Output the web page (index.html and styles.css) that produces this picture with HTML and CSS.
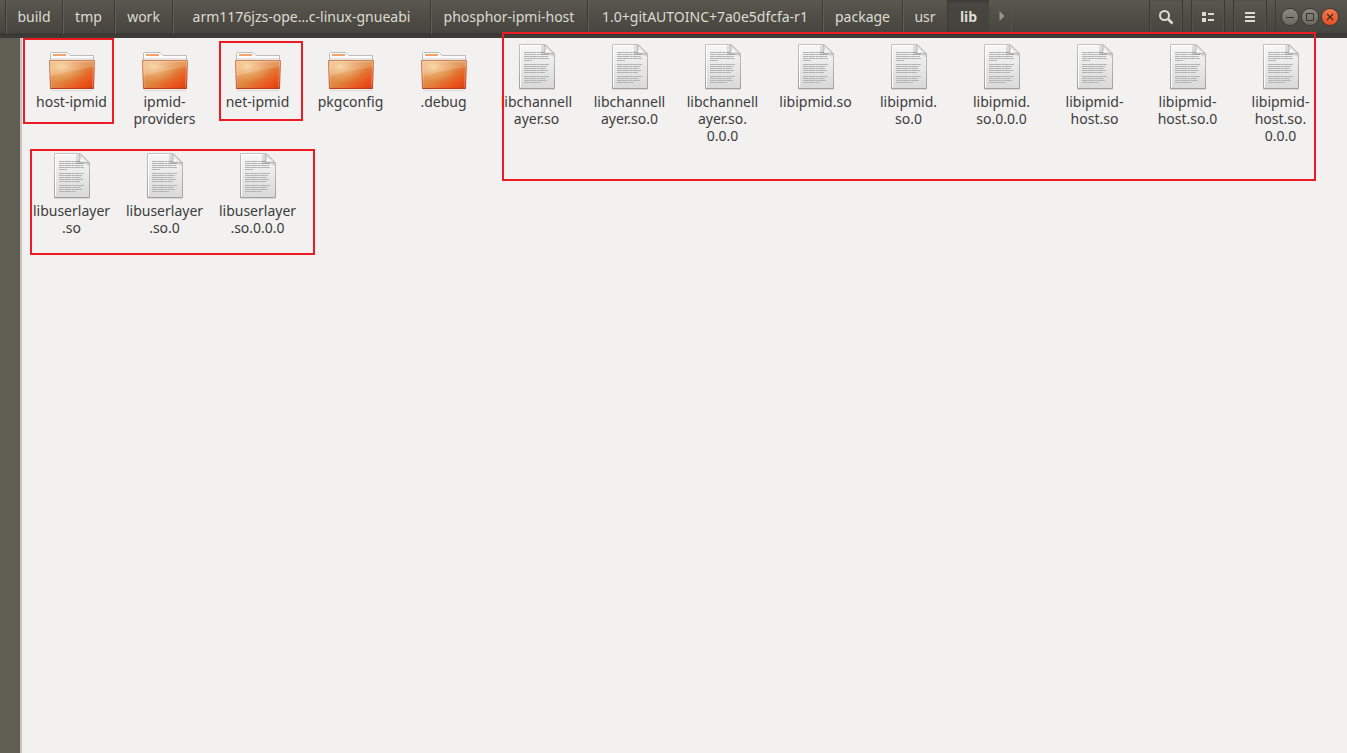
FILE: index.html
```html
<!DOCTYPE html>
<html lang="en">
<head>
  <meta charset="UTF-8">
  <meta name="viewport" content="width=device-width, initial-scale=1.0">
  <title>lib</title>
  <link rel="stylesheet" href="styles.css">
</head>
<body>
  <!-- shared icons -->
  <svg class="defs" width="0" height="0" aria-hidden="true">
    <defs>
      <linearGradient id="folder-front" x1="0" y1="0" x2="1" y2="1">
        <stop offset="0" stop-color="#eba868"/>
        <stop offset="0.5" stop-color="#de8740"/>
        <stop offset="0.8" stop-color="#ea5419"/>
        <stop offset="1" stop-color="#d63c12"/>
      </linearGradient>
      <radialGradient id="folder-glow" cx="0.25" cy="0.2" r="0.6">
        <stop offset="0" stop-color="#f8d8a0" stop-opacity="0.9"/>
        <stop offset="1" stop-color="#f0a870" stop-opacity="0"/>
      </radialGradient>
      <linearGradient id="folder-edge" x1="0" y1="0" x2="0" y2="1">
        <stop offset="0" stop-color="#cf8257"/>
        <stop offset="1" stop-color="#b83a18"/>
      </linearGradient>
      <linearGradient id="paper" x1="0" y1="0" x2="0" y2="1">
        <stop offset="0" stop-color="#f7f7f7"/>
        <stop offset="1" stop-color="#d9d9d9"/>
      </linearGradient>
      <linearGradient id="paper-edge" x1="0" y1="0" x2="0" y2="1">
        <stop offset="0" stop-color="#c2c4c3"/>
        <stop offset="1" stop-color="#a0a0a0"/>
      </linearGradient>
      <linearGradient id="fold" x1="0" y1="1" x2="0.6" y2="0.4">
        <stop offset="0" stop-color="#a8a8a8"/>
        <stop offset="0.4" stop-color="#ffffff"/>
        <stop offset="1" stop-color="#dcdcdc"/>
      </linearGradient>
    </defs>
    <symbol id="folder" viewBox="0 0 47 48">
      <path d="M3 47h42v1H3z" fill="#000" opacity="0.1"/>
      <path d="M2.500 20V10.500q0-1 1-1H19l3 3h23.500V20z" fill="#fbfbfb" stroke="#bcbcba"/>
      <path d="M5 11h13v2H5z" fill="#f2a36c"/>
      <path d="M3 15h42v2H3z" fill="#e4e4e2"/>
      <path d="M1.500 17.500h45l-1 28h-43z" fill="url(#folder-front)" stroke="url(#folder-edge)"/>
      <path d="M2 18h44l-1 27H3z" fill="url(#folder-glow)"/>
      <path d="M2 18h44v6Q24 27 2.500 33z" fill="#fff" opacity="0.16"/>
      <path d="M3 45V18.500h42.500l-1 26" fill="none" stroke="#fff" opacity="0.25"/>
    </symbol>
    <symbol id="file" viewBox="0 0 47 48">
      <path d="M6 46h36v1H6z" fill="#000" opacity="0.1"/>
      <path d="M6.500 1.500H32l9.500 9.500v34.500h-35z" fill="url(#paper)" stroke="url(#paper-edge)"/>
      <path d="M7.500 44V2.500h23" fill="none" stroke="#fff"/>
      <g stroke="#b3b3b3" stroke-dasharray="5 0.300 7 0.300 3 0.300">
        <path d="M11 9.500h25M11 11.500h25M11 13.500h24M11 15.500h25M11 17.500h8"/>
        <path d="M11 21.500h25M11 23.500h23M11 25.500h22M11 27.500h24M11 29.500h21"/>
        <path d="M11 33.500h25M11 35.500h22M11 37.500h23M11 39.500h17"/>
      </g>
      <!-- folded corner with its shadow -->
      <path d="M28 2h4v8l9 1v3q-5-3-13-2z" fill="#000" opacity="0.1"/>
      <path d="M31 2q2 4 0 8.500 5-1 10.500 0.500L32 1.500z" fill="url(#fold)"/>
      <path d="M31.500 2q1.500 4-0.500 8.500 5-1 10.500 0.500L32 1.500" fill="none" stroke="#b0b0b0"/>
    </symbol>
  </svg>

  <header class="headerbar">
    <nav class="pathbar" aria-label="Location">
      <button>build</button>
      <button>tmp</button>
      <button>work</button>
      <button>arm1176jzs-ope…c-linux-gnueabi</button>
      <button>phosphor-ipmi-host</button>
      <button>1.0+gitAUTOINC+7a0e5dfcfa-r1</button>
      <button>package</button>
      <button>usr</button>
      <button class="current">lib</button>
      <button class="next" aria-label="Next"><svg width="6" height="12" viewBox="0 0 6 12"><path d="M0.500 1v10l5-5z" fill="#97958d"/></svg></button>
    </nav>
    <div class="tools">
      <button aria-label="Search"><svg width="16" height="16" viewBox="0 0 16 16"><circle cx="6.500" cy="6.500" r="4.500" fill="none" stroke="#dfdbd2" stroke-width="2"/><path d="M9.500 9.500l5 5" stroke="#dfdbd2" stroke-width="2.500"/></svg></button>
      <button aria-label="View as list"><svg width="16" height="16" viewBox="0 0 16 16" fill="#dfdbd2"><path d="M2 3h4v4H2zM2 9h4v4H2zM8 4h6v2H8zM8 10h6v2H8z"/></svg></button>
      <button aria-label="Menu"><svg width="16" height="16" viewBox="0 0 16 16" fill="#dfdbd2"><path d="M3 3h10v2H3zM3 7h10v2H3zM3 11h10v2H3z"/></svg></button>
    </div>
    <div class="window-controls">
      <button aria-label="Minimize"><svg width="16" height="16" viewBox="0 0 16 16"><path d="M4 8.500h8" stroke="#35342f"/></svg></button>
      <button aria-label="Maximize"><svg width="16" height="16" viewBox="0 0 16 16"><path d="M4.500 4.500h7v7h-7z" fill="none" stroke="#35342f"/></svg></button>
      <button class="close" aria-label="Close"><svg width="16" height="16" viewBox="0 0 16 16"><path d="M5 5l6 6M11 5l-6 6" stroke="#3c2a20" stroke-width="1.300"/></svg></button>
    </div>
  </header>

  <div class="window">
    <aside class="sidebar"></aside>
    <main class="files">
      <a href="#" class="item"><svg><use href="#folder"/></svg><span>host-ipmid</span></a>
      <a href="#" class="item"><svg><use href="#folder"/></svg><span>ipmid-<br>providers</span></a>
      <a href="#" class="item"><svg><use href="#folder"/></svg><span>net-ipmid</span></a>
      <a href="#" class="item"><svg><use href="#folder"/></svg><span>pkgconfig</span></a>
      <a href="#" class="item"><svg><use href="#folder"/></svg><span>.debug</span></a>
      <a href="#" class="item"><svg><use href="#file"/></svg><span>libchannell<br>ayer.so</span></a>
      <a href="#" class="item"><svg><use href="#file"/></svg><span>libchannell<br>ayer.so.0</span></a>
      <a href="#" class="item"><svg><use href="#file"/></svg><span>libchannell<br>ayer.so.<br>0.0.0</span></a>
      <a href="#" class="item"><svg><use href="#file"/></svg><span>libipmid.so</span></a>
      <a href="#" class="item"><svg><use href="#file"/></svg><span>libipmid.<br>so.0</span></a>
      <a href="#" class="item"><svg><use href="#file"/></svg><span>libipmid.<br>so.0.0.0</span></a>
      <a href="#" class="item"><svg><use href="#file"/></svg><span>libipmid-<br>host.so</span></a>
      <a href="#" class="item"><svg><use href="#file"/></svg><span>libipmid-<br>host.so.0</span></a>
      <a href="#" class="item"><svg><use href="#file"/></svg><span>libipmid-<br>host.so.<br>0.0.0</span></a>
      <a href="#" class="item"><svg><use href="#file"/></svg><span>libuserlayer<br>.so</span></a>
      <a href="#" class="item"><svg><use href="#file"/></svg><span>libuserlayer<br>.so.0</span></a>
      <a href="#" class="item"><svg><use href="#file"/></svg><span>libuserlayer<br>.so.0.0.0</span></a>
    </main>
  </div>

  <!-- highlight boxes -->
  <div class="mark mark-host"></div>
  <div class="mark mark-net"></div>
  <div class="mark mark-libs"></div>
  <div class="mark mark-user"></div>
</body>
</html>
```
FILE: styles.css
```css
* {
  box-sizing: border-box;
}
body {
  margin: 0;
  min-height: 100vh;
  display: flex;
  flex-direction: column;
  position: relative;
  font-family: "Noto Sans", "Open Sans", sans-serif;
  font-size: 14px;
  color: #3c3c3c;
  background-color: #f2f1f0;
}
.defs {
  position: absolute;
}
button {
  font: inherit;
  color: inherit;
  background: none;
  border: none;
  padding: 0;
  display: flex;
  align-items: center;
  justify-content: center;
  white-space: nowrap;
}
.headerbar {
  display: flex;
  height: 38px;
  padding: 0 9px 4px 5px;
  color: #dfdbd2;
  background: linear-gradient(#59574e, #45443e 33px, #33322e 34px, #3c3b37 35px, #3c3b37);
}
.pathbar {
  display: grid;
  grid-template-columns: 57px 52px 58px 258px 157px 235px 80px 45px 42px 23px;
}
.pathbar button {
  padding-bottom: 2px;
  border-left: 1px solid #3a3934;
  box-shadow: inset 1px 0 #5f5d55;
}
.pathbar .current {
  font-weight: bold;
  background: linear-gradient(#3c3b36, #474640 4px, #42413b);
  box-shadow: none;
}
.pathbar .next {
  padding-left: 4px;
  border-left: none;
  border-right: 1px solid #55544c;
  box-shadow: none;
}
.tools {
  display: flex;
  gap: 8px;
  margin-left: auto;
  padding-right: 8px;
}
.tools button {
  width: 34px;
  border: 1px solid #3a3934;
  border-top: none;
  border-radius: 0 0 4px 4px;
  box-shadow: inset 0 0 0 1px #55534b;
}
.window-controls {
  display: flex;
  align-items: center;
  gap: 4px;
  padding-left: 6px;
  border-left: 1px solid #3e3d38;
}
.window-controls button {
  width: 16px;
  height: 16px;
  border-radius: 50%;
  background: linear-gradient(#8b8981, #6b6962);
  box-shadow: 0 0 0 1px #3a3934;
}
.window-controls .close {
  background: linear-gradient(#f5784f, #e4501f);
}
.window {
  flex: 1;
  display: flex;
}
.sidebar {
  width: 22px;
  background-color: #605e52;
  border-right: 2px solid #c8c3bf;
}
.files {
  flex: 1;
  display: grid;
  grid-template-columns: repeat(auto-fill, 93px);
  align-content: start;
  gap: 8px 0;
  padding: 5px 3px;
}
.item {
  display: flex;
  flex-direction: column;
  align-items: center;
  gap: 2px;
  color: inherit;
  text-decoration: none;
  text-align: center;
  line-height: 17px;
  white-space: nowrap;
}
.item svg {
  width: 47px;
  height: 48px;
}
.mark {
  position: absolute;
  border: 2px solid #ed1c24;
  pointer-events: none;
}
.mark-host {
  left: 23px;
  top: 38px;
  width: 91px;
  height: 86px;
}
.mark-net {
  left: 219px;
  top: 41px;
  width: 84px;
  height: 80px;
}
.mark-libs {
  left: 502px;
  top: 32px;
  width: 814px;
  height: 149px;
}
.mark-user {
  left: 30px;
  top: 149px;
  width: 285px;
  height: 106px;
}
```
